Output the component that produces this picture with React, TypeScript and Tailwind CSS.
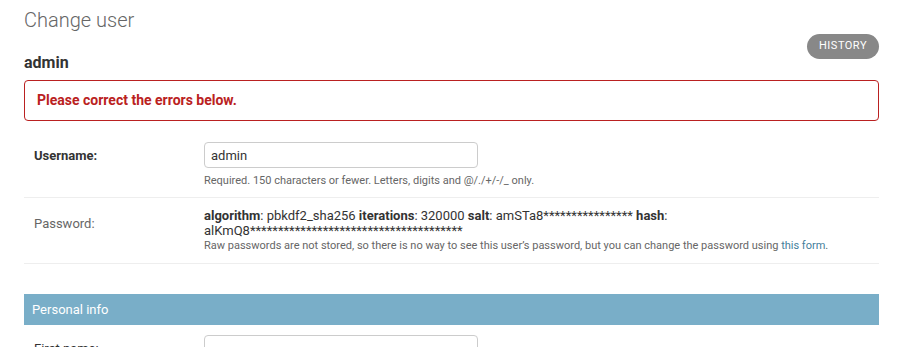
export default function App() {
  return (
    <div className="min-h-screen bg-white font-['Roboto',sans-serif] text-[14px] text-[#333]">
      <div className="pl-[24px] pr-[32px] pt-[8px]">
        <h1 className="text-[20px] font-light leading-[24px] text-[#666]">Change user</h1>

        <div className="flex items-end justify-between">
          <h2 className="mt-[21px] text-[16px] font-bold leading-[20px] text-[#333]">admin</h2>
          <a className="mb-[14px] flex h-[25px] items-center rounded-full bg-[#888] px-[12px] text-[11px] uppercase tracking-[0.5px] text-white">
            History
          </a>
        </div>

        <p className="mt-[7px] rounded-[4px] border border-[#ba2121] px-[12px] py-[11px] text-[14px] font-bold leading-[17px] text-[#ba2121]">
          Please correct the errors below.
        </p>

        <fieldset className="mt-[11px]">
          <div className="flex border-b border-[#eee] p-[10px] text-[13px]">
            <label className="w-[170px] shrink-0 pr-[10px] pt-[6px] text-[13px] font-bold leading-[16px] text-[#333]">
              Username:
            </label>
            <div className="flex-1">
              <input
                defaultValue="admin"
                className="h-[26px] w-[274px] rounded-[4px] border border-[#ccc] px-[6px] text-[13px] text-[#333] outline-none"
              />
              <div className="mt-[6px] whitespace-nowrap text-[11px] leading-[13px] text-[#666]">
                Required. 150 characters or fewer. Letters, digits and @/./+/-/_ only.
              </div>
            </div>
          </div>

          <div className="flex border-b border-[#eee] p-[10px] text-[13px]">
            <label className="w-[170px] shrink-0 pr-[10px] pt-[8px] text-[13px] leading-[16px] text-[#666]">
              Password:
            </label>
            <div className="flex-1">
              <div className="max-w-[480px] text-[13px] leading-[15px] text-[#333]">
                <strong>algorithm</strong>: pbkdf2_sha256 <strong>iterations</strong>: 320000{" "}
                <strong>salt</strong>: amSTa8**************** <strong>hash</strong>:
                alKmQ8**************************************
              </div>
              <div className="mt-[1px] whitespace-nowrap text-[11px] leading-[14px] text-[#666]">
                Raw passwords are not stored, so there is no way to see this user’s password, but you can change
                the password using <a className="text-[#447e9b]">this form</a>.
              </div>
            </div>
          </div>
        </fieldset>

        <fieldset className="mt-[30px]">
          <h2 className="bg-[#79aec8] px-[8px] py-[8px] text-[13px] leading-[15px] text-white">Personal info</h2>
          <div className="flex p-[10px] text-[13px]">
            <label className="w-[170px] shrink-0 pr-[10px] pt-[6px] text-[13px] leading-[16px] text-[#333]">
              First name:
            </label>
            <input className="h-[26px] w-[274px] rounded-[4px] border border-[#ccc] px-[6px] text-[13px] outline-none" />
          </div>
        </fieldset>
      </div>
    </div>
  );
}
